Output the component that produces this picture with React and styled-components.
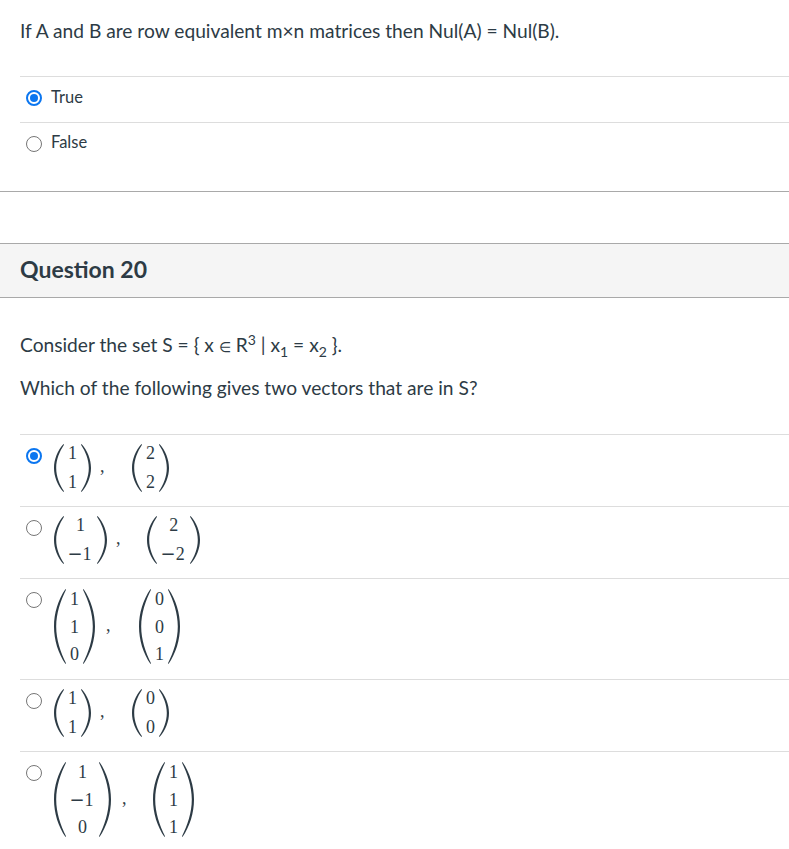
import React from 'react'
import styled, { createGlobalStyle } from 'styled-components'

const Global = createGlobalStyle`
  html, body { margin: 0; padding: 0; background: #fff; }
  body { font-family: Lato, "Open Sans", sans-serif; color: #2d3b45; }
`

const Page = styled.div`
  width: 789px;
  height: 849px;
  overflow: hidden;
`

const QuestionText = styled.p`
  margin: 0 0 31px;
  padding: 17px 20px 0;
  font-size: 19.2px;
  line-height: 28px;
`

const Answers = styled.div`
  margin-left: 20px;
`

const AnswerRow = styled.div`
  display: flex;
  align-items: flex-start;
  box-sizing: border-box;
  height: ${p => p.$height}px;
  border-top: 1px solid #dddddd;
`

const RadioCell = styled.div`
  flex: none;
  box-sizing: border-box;
  width: 34px;
  padding: 13px 0 0 6px;
`

const Radio = styled.span`
  display: block;
  box-sizing: border-box;
  width: 16px;
  height: 16px;
  border-radius: 50%;
  background: #fff;
  border: ${p => (p.$checked ? '2px solid #0b76f0' : '1px solid #767676')};
  &::after {
    content: '';
    display: ${p => (p.$checked ? 'block' : 'none')};
    width: 8px;
    height: 8px;
    margin: 2px;
    border-radius: 50%;
    background: #0b76f0;
  }
`

const Label = styled.span`
  margin-left: -3px;
  padding-top: ${p => p.$top}px;
  font-size: 16.5px;
  line-height: 24px;
`

const Rule = styled.div`
  height: 1px;
  background: #a9a9a9;
`

const QuestionHeader = styled.div`
  box-sizing: border-box;
  display: flex;
  align-items: center;
  height: 55px;
  margin-top: 51px;
  padding: 0 20px 3px;
  background: #f5f5f5;
  border-top: 1px solid #a9a9a9;
  border-bottom: 1px solid #a9a9a9;
`

const QuestionTitle = styled.h2`
  margin: 0;
  font-size: 23px;
  font-weight: 700;
  line-height: 28px;
`

const Body = styled.div`
  padding: 33px 0 33px;
`

const BodyText = styled.p`
  margin: 0 0 16px;
  padding: 0 20px;
  font-size: 19.2px;
  line-height: 27px;
  &:last-child { margin-bottom: 0; }
  sup, sub { font-size: 14px; line-height: 0; }
`

const Member = styled.span`
  font-size: 14px;
  line-height: 0;
`

const Vectors = styled.div`
  display: flex;
  align-items: center;
  padding-top: ${p => p.$top}px;
`

const Matrix = styled.div`
  display: flex;
  align-items: stretch;
`

const Cells = styled.div`
  display: flex;
  flex-direction: column;
  justify-content: space-between;
  align-items: center;
  padding: 0 ${p => p.$pad}px;
  font-family: "Liberation Serif", "DejaVu Serif", serif;
  font-size: 18px;
  line-height: ${p => p.$line}px;
`

const Minus = styled.span`
  margin-left: -2px;
  font-family: "DejaVu Sans", sans-serif;
  font-size: 18px;
  line-height: 0;
`

const Comma = styled.span`
  width: 4px;
  margin: 0 ${p => p.$after}px 0 ${p => p.$before}px;
  padding-bottom: 4px;
  font-family: "Liberation Serif", serif;
  font-size: 18px;
  line-height: 18px;
`

function Paren({ height: h, width: w, right }) {
  // filled so the stroke swells in the middle, like a typeset paren
  const d = `M${w - 0.5} 0 C${w * 0.35} ${h * 0.14} 0 ${h * 0.32} 0 ${h / 2} C0 ${h * 0.68} ${w * 0.35} ${h * 0.86} ${w - 0.5} ${h} L${w} ${h - 0.7} C${w * 0.55} ${h * 0.84} 2.2 ${h * 0.68} 2.2 ${h / 2} C2.2 ${h * 0.32} ${w * 0.55} ${h * 0.16} ${w} 0.7 Z`
  return (
    <svg width={w} height={h} viewBox={`0 0 ${w} ${h}`} transform={right ? 'scale(-1 1)' : undefined}>
      <path d={d} fill="#2d3b45" />
    </svg>
  )
}

function Vector({ values }) {
  const tall = values.length > 2
  const wide = values.some(v => v < 0)
  return (
    <Matrix>
      <Paren height={tall ? 75 : 48} width={tall ? 12 : 10} />
      <Cells $pad={wide ? 5.5 : 4} $line={tall ? 20 : 19}>
        {values.map((v, i) => (
          <span key={i}>{v < 0 ? <><Minus>−</Minus>{-v}</> : v}</span>
        ))}
      </Cells>
      <Paren height={tall ? 75 : 48} width={tall ? 12 : 10} right />
    </Matrix>
  )
}

const options = [
  { h: 72, top: 9, checked: true, a: [1, 1], b: [2, 2], before: 9, after: 28 },
  { h: 72, top: 9, a: [1, -1], b: [2, -2], before: 9, after: 27 },
  { h: 101, top: 10, a: [1, 1, 0], b: [0, 0, 1], before: 11, after: 29 },
  { h: 72, top: 9, a: [1, 1], b: [0, 0], before: 9, after: 28 },
  { h: 98, top: 10, a: [1, -1, 0], b: [1, 1, 1], before: 11, after: 27 },
]

export default function App() {
  return (
    <Page>
      <Global />
      <QuestionText>If A and B are row equivalent m×n matrices then Nul(A) = Nul(B).</QuestionText>
      <Answers>
        <AnswerRow $height={46}>
          <RadioCell><Radio $checked /></RadioCell>
          <Label $top={8}>True</Label>
        </AnswerRow>
        <AnswerRow $height={69}>
          <RadioCell><Radio /></RadioCell>
          <Label $top={7}>False</Label>
        </AnswerRow>
      </Answers>
      <Rule />
      <QuestionHeader>
        <QuestionTitle>Question 20</QuestionTitle>
      </QuestionHeader>
      <Body>
        <BodyText>Consider the set S = {'{'} x <Member>∈</Member> R<sup>3</sup> | x<sub>1</sub> = x<sub>2</sub> {'}'}.</BodyText>
        <BodyText>Which of the following gives two vectors that are in S?</BodyText>
      </Body>
      <Answers>
        {options.map((o, i) => (
          <AnswerRow key={i} $height={o.h}>
            <RadioCell><Radio $checked={o.checked} /></RadioCell>
            <Vectors $top={o.top}>
              <Vector values={o.a} />
              <Comma $before={o.before} $after={o.after}>,</Comma>
              <Vector values={o.b} />
            </Vectors>
          </AnswerRow>
        ))}
      </Answers>
    </Page>
  )
}
